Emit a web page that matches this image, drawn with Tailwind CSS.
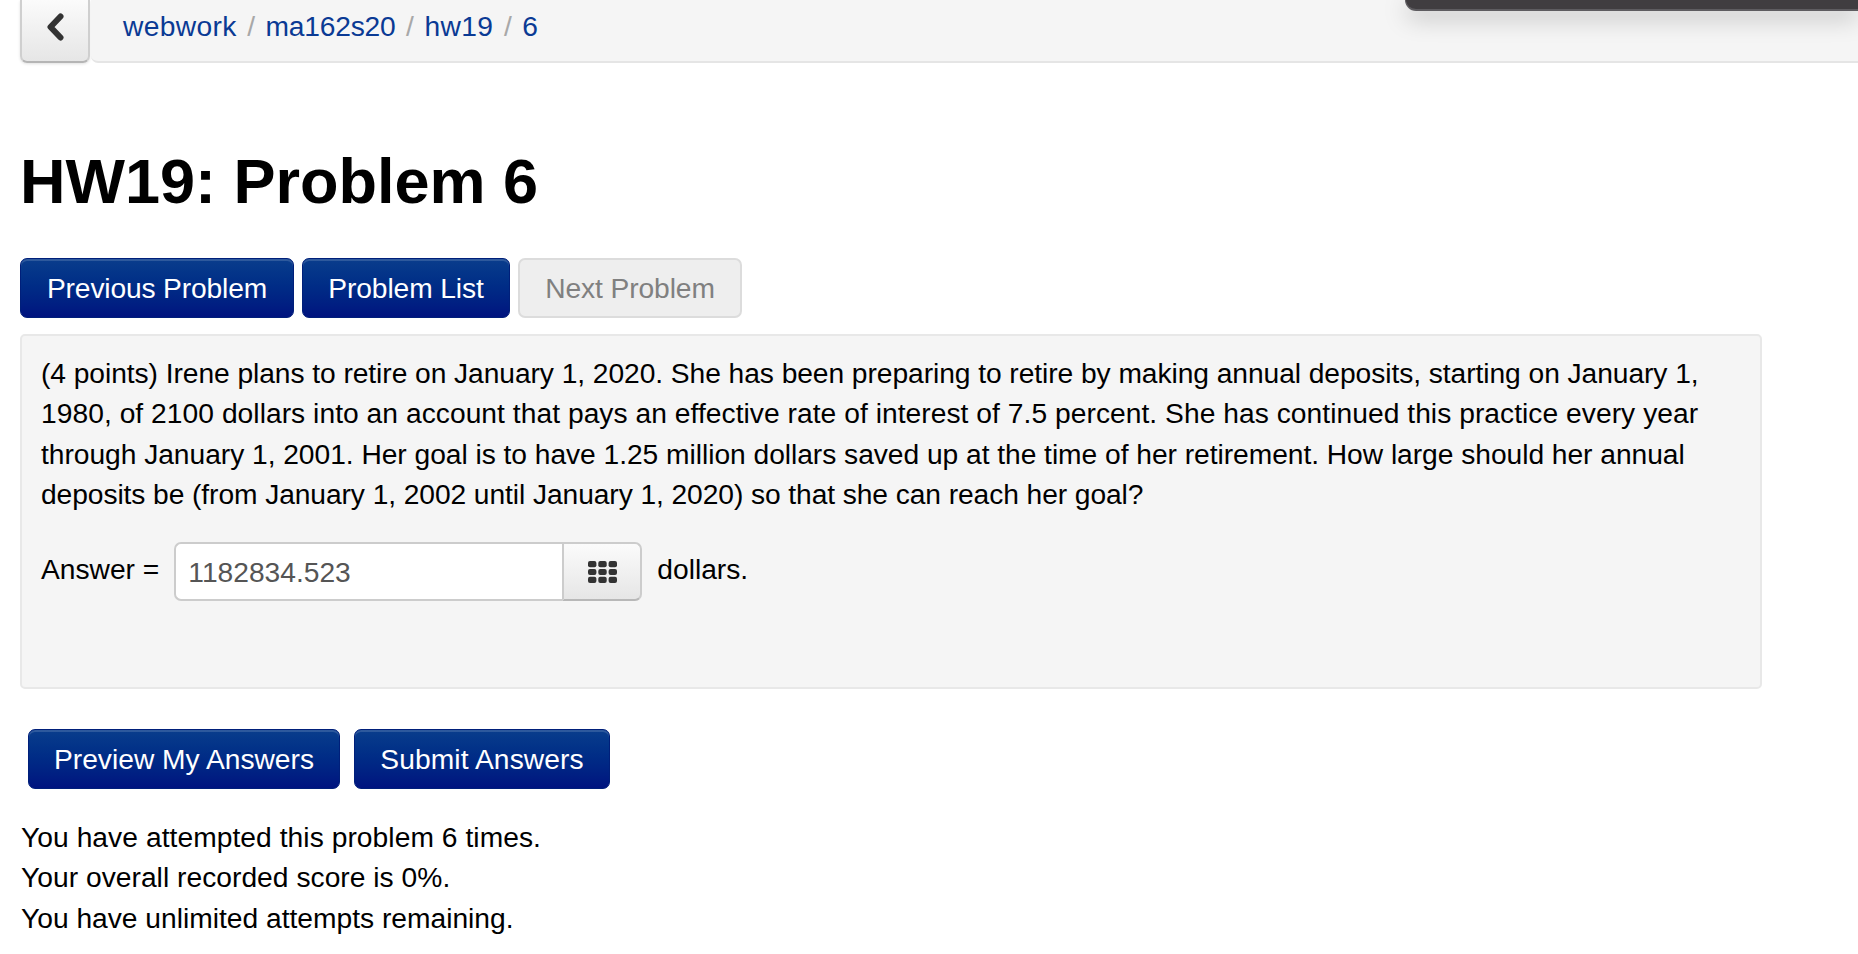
<!DOCTYPE html>
<html lang="en">
<head>
<meta charset="utf-8">
<title>HW19: Problem 6</title>
<script src="https://cdn.jsdelivr.net/npm/@tailwindcss/browser@4"></script>
</head>
<body class="relative h-[954px] overflow-hidden bg-white font-['Liberation_Sans',Arial,sans-serif] text-[28.2px] leading-[40.3px] text-black">
  <div class="absolute right-0 top-0 z-10 h-[11px] w-[453px] rounded-bl-[14px] border-b-2 border-l border-[#5e5c60] bg-[#403d40] shadow-[0_6px_24px_rgba(0,0,0,0.28)]"></div>

  <header class="flex h-[63px] pl-[20px]">
    <a class="flex h-full w-[70px] items-center justify-center rounded-b-[7px] border-2 border-t-0 border-[#cfcfcf] border-b-[#b5b5b5] bg-gradient-to-b from-[#fbfbfb] to-[#e6e6e6] shadow-[0_1px_3px_rgba(0,0,0,0.12)]">
      <svg class="mb-[8px]" width="18" height="28" viewBox="0 0 18 28"><path d="M14.5 3.5 L4.5 14 L14.5 24.5" fill="none" stroke="#333" stroke-width="6" stroke-linecap="round" stroke-linejoin="round"/></svg>
    </a>
    <nav class="ml-[1px] flex flex-1 items-start rounded-bl-[7px] border-b-2 border-[#e5e5e5] bg-[#f5f5f5] pl-[32px] pt-[6px]">
      <a class="tracking-[0.35px] text-[#0a3a94]">webwork</a><span class="mx-[10.5px] text-[#a8a8a8]">/</span><a class="tracking-[-0.2px] text-[#0a3a94]">ma162s20</a><span class="mx-[10.5px] text-[#a8a8a8]">/</span><a class="tracking-[0.4px] text-[#0a3a94]">hw19</a><span class="mx-[10.5px] text-[#a8a8a8]">/</span><a class="text-[#0a3a94]">6</a>
    </nav>
  </header>

  <main class="pl-[20px]">
    <h1 class="mt-[78px] text-[63px] font-bold leading-[80px]">HW19: Problem 6</h1>

    <div class="mt-[37px] flex gap-[8px]">
      <button class="h-[60px] w-[274px] rounded-[7px] border border-[#001f7a] bg-gradient-to-b from-[#0a3d8c] to-[#00137f] tracking-[-0.15px] text-white shadow-[inset_0_2px_0_rgba(255,255,255,0.15)]">Previous Problem</button>
      <button class="h-[60px] w-[208px] rounded-[7px] border border-[#001f7a] bg-gradient-to-b from-[#0a3d8c] to-[#00137f] tracking-[-0.1px] text-white shadow-[inset_0_2px_0_rgba(255,255,255,0.15)]">Problem List</button>
      <button class="h-[60px] w-[224px] rounded-[7px] border-2 border-[#dcdcdc] bg-[#eeeeee] tracking-[-0.1px] text-[#808080]">Next Problem</button>
    </div>

    <section class="mt-[16px] h-[355px] w-[1742px] rounded-[5px] border-2 border-[#e8e8e8] bg-[#f5f5f5] pl-[19px] pt-[17px]">
      <p>
        <span class="block tracking-[-0.06px]">(4 points) Irene plans to retire on January 1, 2020. She has been preparing to retire by making annual deposits, starting on January 1,</span>
        <span class="block tracking-[0.045px]">1980, of 2100 dollars into an account that pays an effective rate of interest of 7.5 percent. She has continued this practice every year</span>
        <span class="block tracking-[-0.035px]">through January 1, 2001. Her goal is to have 1.25 million dollars saved up at the time of her retirement. How large should her annual</span>
        <span class="block tracking-[-0.08px]">deposits be (from January 1, 2002 until January 1, 2020) so that she can reach her goal?</span>
      </p>
      <div class="mt-[28px] flex items-start">
        <span class="mt-[7px]">Answer =</span>
        <div class="ml-[15px] flex h-[59px] w-[468px]">
          <div class="flex w-[388px] items-center rounded-l-[7px] border-2 border-r-0 border-[#cccccc] bg-white pl-[12px] text-[#555555]">1182834.523</div>
          <div class="flex w-[80px] items-center justify-center rounded-r-[7px] border-2 border-[#cccccc] border-b-[#b8b8b8] bg-gradient-to-b from-[#fbfbfb] to-[#e6e6e6]">
            <svg width="29" height="22" viewBox="0 0 29 22" fill="#333"><rect x="0" y="0" width="8.4" height="6.2" rx="2"/><rect x="10.3" y="0" width="8.4" height="6.2" rx="2"/><rect x="20.6" y="0" width="8.4" height="6.2" rx="2"/><rect x="0" y="7.9" width="8.4" height="6.2" rx="2"/><rect x="10.3" y="7.9" width="8.4" height="6.2" rx="2"/><rect x="20.6" y="7.9" width="8.4" height="6.2" rx="2"/><rect x="0" y="15.8" width="8.4" height="6.2" rx="2"/><rect x="10.3" y="15.8" width="8.4" height="6.2" rx="2"/><rect x="20.6" y="15.8" width="8.4" height="6.2" rx="2"/></svg>
          </div>
        </div>
        <span class="ml-[15px] mt-[7px]">dollars.</span>
      </div>
    </section>

    <div class="ml-[8px] mt-[40px] flex gap-[14px]">
      <button class="h-[60px] w-[312px] rounded-[7px] border border-[#001f7a] bg-gradient-to-b from-[#0a3d8c] to-[#00137f] text-white shadow-[inset_0_2px_0_rgba(255,255,255,0.15)]">Preview My Answers</button>
      <button class="h-[60px] w-[256px] rounded-[7px] border border-[#001f7a] bg-gradient-to-b from-[#0a3d8c] to-[#00137f] tracking-[0.1px] text-white shadow-[inset_0_2px_0_rgba(255,255,255,0.15)]">Submit Answers</button>
    </div>

    <div class="mt-[28px] pl-[1px]">
      <p class="tracking-[0.06px]">You have attempted this problem 6 times.</p>
      <p class="tracking-[0.03px]">Your overall recorded score is 0%.</p>
      <p>You have unlimited attempts remaining.</p>
    </div>
  </main>
</body>
</html>
